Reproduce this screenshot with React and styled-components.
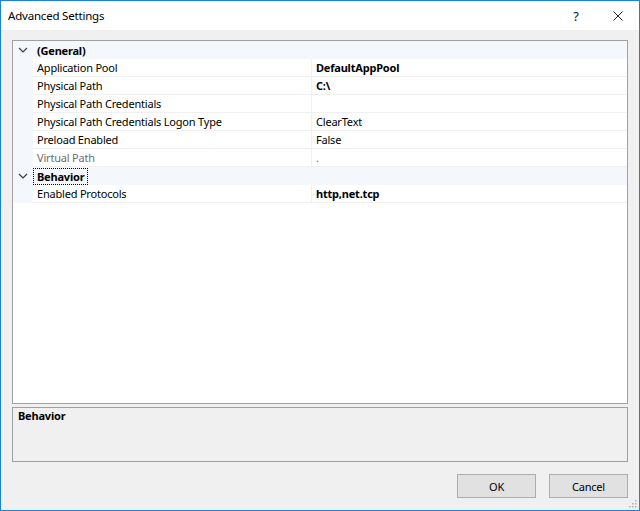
import React from 'react';
import styled, { createGlobalStyle } from 'styled-components';

const GlobalStyle = createGlobalStyle`
  html, body {
    margin: 0;
    padding: 0;
    background: #ffffff;
  }
  body {
    font-family: 'Segoe UI', 'Noto Sans', 'Open Sans', sans-serif;
    font-size: 11px;
    letter-spacing: -0.2px;
    color: #000000;
  }
`;

const properties = [
  {
    category: '(General)',
    items: [
      { name: 'Application Pool', value: 'DefaultAppPool', bold: true },
      { name: 'Physical Path', value: 'C:\\', bold: true },
      { name: 'Physical Path Credentials', value: '' },
      { name: 'Physical Path Credentials Logon Type', value: 'ClearText' },
      { name: 'Preload Enabled', value: 'False' },
      { name: 'Virtual Path', value: '.', disabled: true },
    ],
  },
  {
    category: 'Behavior',
    focused: true,
    items: [{ name: 'Enabled Protocols', value: 'http,net.tcp', bold: true }],
  },
];

const Window = styled.div`
  position: relative;
  width: 640px;
  height: 511px;
  box-sizing: border-box;
  border: 1px solid #1883d7;
  background: #f0f0f0;
  display: flex;
  flex-direction: column;
`;

const TitleBar = styled.div`
  height: 29px;
  flex-shrink: 0;
  background: #ffffff;
  display: flex;
  align-items: center;
  padding-left: 7px;
`;

const Title = styled.span`
  font-size: 11.5px;
`;

const TitleButtons = styled.div`
  margin-left: auto;
  display: flex;
  height: 100%;
`;

const TitleButton = styled.div`
  width: 42px;
  height: 100%;
  display: flex;
  align-items: center;
  justify-content: center;
  font-size: 13px;
  color: #111111;
`;

const Body = styled.div`
  flex: 1;
  display: flex;
  flex-direction: column;
  padding: 10px 11px 0 11px;
`;

const Grid = styled.div`
  height: 364px;
  flex-shrink: 0;
  box-sizing: border-box;
  border: 1px solid #a0a0a0;
  background: #ffffff;
  overflow: hidden;
`;

const CategoryRow = styled.div`
  display: flex;
  align-items: center;
  height: 18px;
  background: #f4f7fc;
`;

const Gutter = styled.div`
  width: 20px;
  height: 100%;
  flex-shrink: 0;
  display: flex;
  align-items: center;
  justify-content: center;
  background: #f4f7fc;
`;

const CategoryLabel = styled.span`
  box-sizing: border-box;
  height: 17px;
  display: flex;
  align-items: center;
  padding: 0 3px;
  font-weight: 700;
  border: 1px dotted ${(p) => (p.$focused ? '#000000' : 'transparent')};
`;

const PropertyRow = styled.div`
  display: grid;
  grid-template-columns: 20px 279px 1fr;
  height: 18px;
`;

const Cell = styled.div`
  box-sizing: border-box;
  display: flex;
  align-items: center;
  padding-left: 4px;
  border-bottom: 1px solid #f0f0f0;
  white-space: nowrap;
  overflow: hidden;
  color: ${(p) => (p.$disabled ? '#6d6d6d' : '#000000')};
  font-weight: ${(p) => (p.$bold ? 700 : 400)};
`;

const NameCell = styled(Cell)`
  border-right: 1px solid #f0f0f0;
`;

const Description = styled.div`
  margin-top: 3px;
  height: 55px;
  flex-shrink: 0;
  box-sizing: border-box;
  border: 1px solid #a0a0a0;
  padding: 0 5px;
  font-weight: 700;
`;

const ButtonRow = styled.div`
  display: flex;
  justify-content: flex-end;
  gap: 13px;
  margin-top: 12px;
`;

const Button = styled.button`
  width: 79px;
  height: 24px;
  box-sizing: border-box;
  border: 1px solid #adadad;
  background: #e1e1e1;
  font-family: inherit;
  font-size: 11px;
  letter-spacing: -0.2px;
  color: #000000;
  padding: 0;
`;

const Grip = styled.svg`
  position: absolute;
  right: 2px;
  bottom: 2px;
`;

const Chevron = () => (
  <svg width="10" height="6" viewBox="0 0 10 6">
    <path d="M1 1 L5 5 L9 1" fill="none" stroke="#3c3c3c" strokeWidth="1.2" />
  </svg>
);

const CloseIcon = () => (
  <svg width="10" height="10" viewBox="0 0 10 10">
    <path d="M0.5 0.5 L9.5 9.5 M9.5 0.5 L0.5 9.5" stroke="#222" strokeWidth="1" />
  </svg>
);

const App = () => {
  return (
    <>
      <GlobalStyle />
      <Window>
        <TitleBar>
          <Title>Advanced Settings</Title>
          <TitleButtons>
            <TitleButton>?</TitleButton>
            <TitleButton>
              <CloseIcon />
            </TitleButton>
          </TitleButtons>
        </TitleBar>
        <Body>
          <Grid>
            {properties.map((group) => (
              <React.Fragment key={group.category}>
                <CategoryRow>
                  <Gutter>
                    <Chevron />
                  </Gutter>
                  <CategoryLabel $focused={group.focused}>{group.category}</CategoryLabel>
                </CategoryRow>
                {group.items.map((item) => (
                  <PropertyRow key={item.name}>
                    <Gutter />
                    <NameCell $disabled={item.disabled}>{item.name}</NameCell>
                    <Cell $disabled={item.disabled} $bold={item.bold}>
                      {item.value}
                    </Cell>
                  </PropertyRow>
                ))}
              </React.Fragment>
            ))}
          </Grid>
          <Description>Behavior</Description>
          <ButtonRow>
            <Button>OK</Button>
            <Button>Cancel</Button>
          </ButtonRow>
        </Body>
        <Grip width="8" height="8" viewBox="0 0 8 8">
          <rect x="6" y="0" width="1.5" height="1.5" fill="#b0b0b0" />
          <rect x="3" y="3" width="1.5" height="1.5" fill="#b0b0b0" />
          <rect x="6" y="3" width="1.5" height="1.5" fill="#b0b0b0" />
          <rect x="0" y="6" width="1.5" height="1.5" fill="#b0b0b0" />
          <rect x="3" y="6" width="1.5" height="1.5" fill="#b0b0b0" />
          <rect x="6" y="6" width="1.5" height="1.5" fill="#b0b0b0" />
        </Grip>
      </Window>
    </>
  );
};

export default App;
